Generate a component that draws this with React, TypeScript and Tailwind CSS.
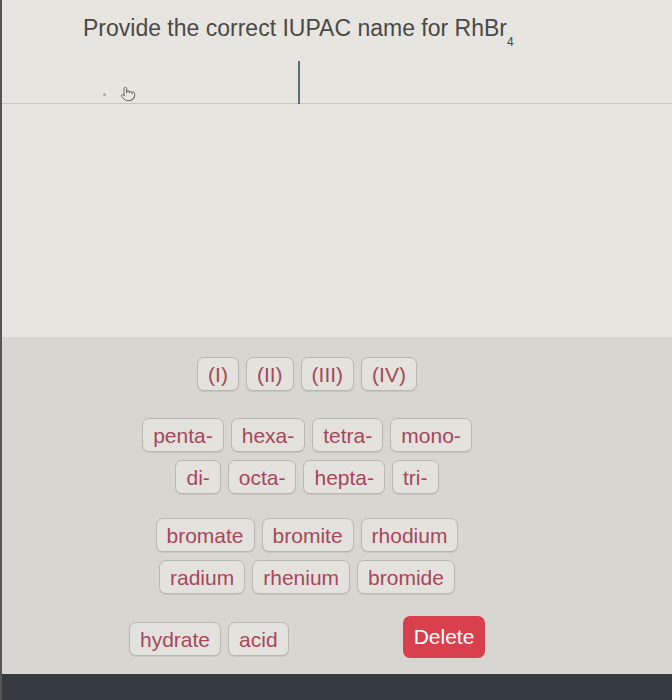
import React from "react";
import { Pointer } from "lucide-react";

const Chip = ({ label }: { label: string }) => (
  <button className="h-[34px] px-[10px] rounded-[7px] border border-[#b9b7b1] bg-[#e3e2dd] text-[21px] leading-none text-[#a6485a] shadow-[0_1px_0_rgba(0,0,0,0.08)]">
    {label}
  </button>
);

const Row = ({ items, className = "" }: { items: string[]; className?: string }) => (
  <div className={`flex justify-center gap-[7px] ${className}`}>
    {items.map((i) => (
      <Chip key={i} label={i} />
    ))}
  </div>
);

export default function App() {
  return (
    <div
      className="w-[672px] h-[700px] flex flex-col overflow-hidden border-l-2 border-[#555]"
      style={{ fontFamily: '"Liberation Sans", Arial, sans-serif' }}
    >
      {/* question area */}
      <section className="h-[337px] bg-[#e7e5e0] flex flex-col">
        <h1 className="pl-[81px] pt-[11px] text-[23px] text-[#4a4947]">
          Provide the correct IUPAC name for RhBr
          <sub className="text-[12px] align-[-7px]">4</sub>
        </h1>
        <div className="relative mt-[13px] h-[45px] border-b border-[#c9c7c1]">
          <span className="absolute left-[101px] top-[34px] w-[3px] h-[3px] rounded-full bg-[#a9a7a2]" />
          <Pointer className="absolute left-[118px] top-[27px] text-[#6b6a67]" size={16} strokeWidth={1.5} />
          <span className="absolute left-[296px] top-[2px] w-[2px] h-[43px] bg-[#5b6a80]" />
        </div>
      </section>

      {/* answer keypad */}
      <section className="flex-1 bg-[#d7d6d1] flex justify-center">
        <div className="w-[356px] ml-[-60px] pt-[20px] flex flex-col">
          <Row items={["(I)", "(II)", "(III)", "(IV)"]} />
          <Row className="mt-[27px]" items={["penta-", "hexa-", "tetra-", "mono-"]} />
          <Row className="mt-[8px]" items={["di-", "octa-", "hepta-", "tri-"]} />
          <Row className="mt-[24px]" items={["bromate", "bromite", "rhodium"]} />
          <Row className="mt-[8px]" items={["radium", "rhenium", "bromide"]} />
          <div className="mt-[22px] flex justify-between items-start">
            <div className="flex gap-[7px] mt-[6px]">
              <Chip label="hydrate" />
              <Chip label="acid" />
            </div>
            <button className="h-[42px] w-[82px] rounded-[7px] bg-[#d8404e] text-white text-[21px]">
              Delete
            </button>
          </div>
        </div>
      </section>

      <div className="h-[26px] bg-[#343a3e]" />
    </div>
  );
}
